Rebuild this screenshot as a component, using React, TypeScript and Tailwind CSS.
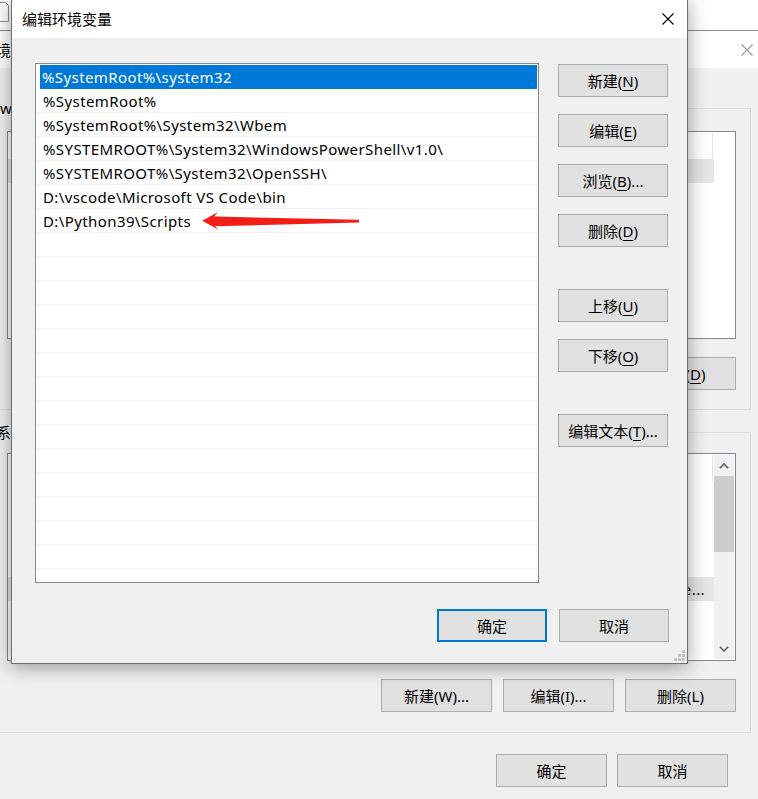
import React from "react";

const FONT = "font-['Noto_Sans','Noto_Sans_CJK_SC',sans-serif]";

function Btn({
  children,
  w = "w-[110px]",
  primary = false,
}: {
  children: React.ReactNode;
  w?: string;
  primary?: boolean;
}) {
  return (
    <div
      className={`flex h-[33px] shrink-0 items-center justify-center bg-[#e1e1e1] text-[15px] leading-[20px] text-black ${w} ${
        primary ? "border-2 border-[#0078d7]" : "border border-[#adadad]"
      }`}
    >
      {children}
    </div>
  );
}

function U({ children }: { children: React.ReactNode }) {
  return <span className="underline decoration-1 underline-offset-[3px]">{children}</span>;
}

function CloseX({ color, size = 12 }: { color: string; size?: number }) {
  return (
    <svg width={size} height={size} viewBox="0 0 12 12" className="shrink-0">
      <path d="M0.5 0.5 L11.5 11.5 M11.5 0.5 L0.5 11.5" stroke={color} strokeWidth="1.1" fill="none" />
    </svg>
  );
}

const paths = [
  "%SystemRoot%\\system32",
  "%SystemRoot%",
  "%SystemRoot%\\System32\\Wbem",
  "%SYSTEMROOT%\\System32\\WindowsPowerShell\\v1.0\\",
  "%SYSTEMROOT%\\System32\\OpenSSH\\",
  "D:\\vscode\\Microsoft VS Code\\bin",
  "D:\\Python39\\Scripts",
];

function BgList({ scroll, hlRow }: { scroll: boolean; hlRow: number }) {
  const rows = Array.from({ length: 8 });
  return (
    <div className="ml-[16px] mr-[14px] mt-[13px] flex h-[208px] overflow-hidden border border-[#828790] bg-white py-[1px]">
      <div className="flex min-w-0 flex-1 flex-col">
        <div className="h-[26px] w-[705px] shrink-0 border-r border-[#e5e5e5]" />
        {rows.map((_, i) => (
          <div
            key={i}
            className={`flex h-[24px] w-[706px] shrink-0 items-center justify-end overflow-hidden whitespace-nowrap pr-[9px] text-[15px] tracking-[0.4px] text-black ${
              i === hlRow ? "bg-[#e5e5e5]" : ""
            }`}
          >
            {i === hlRow && scroll ? "%SystemRoot%\\System32\\Wbem;%SYSTEMROOT%\\Syste..." : ""}
          </div>
        ))}
      </div>
      {scroll && (
        <div className="mr-[1px] flex w-[20px] shrink-0 flex-col bg-[#f0f0f0]">
          <div className="flex h-[21px] items-center justify-center">
            <svg width="10" height="6" viewBox="0 0 10 6">
              <path d="M0.8 5.2 L5 1 L9.2 5.2" stroke="#606060" strokeWidth="1.6" fill="none" />
            </svg>
          </div>
          <div className="h-[76px] bg-[#cdcdcd]" />
          <div className="flex-1" />
          <div className="flex h-[21px] items-center justify-center">
            <svg width="10" height="6" viewBox="0 0 10 6">
              <path d="M0.8 0.8 L5 5 L9.2 0.8" stroke="#606060" strokeWidth="1.6" fill="none" />
            </svg>
          </div>
        </div>
      )}
    </div>
  );
}

function BgButtons({ a, b, c }: { a: React.ReactNode; b: React.ReactNode; c: React.ReactNode }) {
  return (
    <div className="mr-[14px] mt-[18px] flex justify-end gap-[11px]">
      <Btn w="w-[111px]">{a}</Btn>
      <Btn w="w-[111px]">{b}</Btn>
      <Btn w="w-[111px]">{c}</Btn>
    </div>
  );
}

function BackgroundWindow() {
  return (
    <div className="absolute left-[-30px] top-[30px] flex h-[820px] w-[800px] flex-col border border-[#8a8a8a] bg-[#f0f0f0]">
      <div className="flex h-[37px] shrink-0 items-center justify-between bg-white pl-[10px] pr-[16px]">
        <span className="text-[15px] leading-[20px] text-black">环境</span>
        <CloseX color="#9a9a9a" />
      </div>
      <fieldset className="ml-[19px] mr-[18px] mt-[30px] border border-[#dcdcdc] pb-[19px]">
        <legend className="ml-[9px] text-[15px] leading-[20px] text-black">w</legend>
        <BgList scroll={false} hlRow={0} />
        <BgButtons
          a={<>新建(<U>N</U>)...</>}
          b={<>编辑(<U>E</U>)...</>}
          c={<>删除(<U>D</U>)</>}
        />
      </fieldset>
      <fieldset className="ml-[19px] mr-[18px] mt-[12px] border border-[#dcdcdc] pb-[20px]">
        <legend className="ml-[5px] text-[15px] leading-[20px] text-black">系统</legend>
        <div className="mt-[-2px]" />
        <BgList scroll={true} hlRow={4} />
        <BgButtons a={<>新建(W)...</>} b={<>编辑(I)...</>} c={<>删除(L)</>} />
      </fieldset>
      <div className="mr-[41px] mt-[21px] flex justify-end gap-[10px]">
        <Btn w="w-[111px]">确定</Btn>
        <Btn w="w-[111px]">取消</Btn>
      </div>
    </div>
  );
}

function PathList() {
  const empties = Array.from({ length: 16 });
  return (
    <div className="relative h-[520px] w-[504px] shrink-0 overflow-hidden border border-[#828790] bg-white pt-[1px] tracking-[0.4px]">
      <div className="flex h-[24px] pl-[4px] pr-[1px]">
        <div className="flex flex-1 items-center bg-[#0078d7] pl-[2px] text-[15px] leading-[20px] text-white">
          {paths[0]}
        </div>
      </div>
      {paths.slice(1).map((p) => (
        <div
          key={p}
          className="mx-[1px] flex h-[24px] items-center border-b border-[#f0f0f0] pl-[6px] pt-[1px] text-[15px] leading-[20px] text-black"
        >
          {p}
        </div>
      ))}
      {empties.map((_, i) => (
        <div key={i} className="mx-[1px] h-[24px] border-b border-[#f0f0f0]" />
      ))}
      <svg
        className="absolute left-[160px] top-[144px]"
        width="170"
        height="26"
        viewBox="0 0 170 26"
      >
        <polygon
          points="6.3,12.7 22,4 18,8.5 163,11.7 163,14.5 19,18.3 23,22"
          fill="#f21d17"
        />
      </svg>
    </div>
  );
}

function Dialog() {
  return (
    <div className="absolute left-[11px] top-[-1px] flex h-[665px] w-[677px] flex-col border border-[#6f6f6f] bg-[#f0f0f0] shadow-[0_3px_18px_rgba(0,0,0,0.38)]">
      <div className="flex h-[38px] shrink-0 items-center justify-between bg-white pl-[10px] pr-[13px]">
        <span className="text-[15px] leading-[20px] text-black">编辑环境变量</span>
        <CloseX color="#000000" />
      </div>
      <div className="flex flex-1 flex-col pl-[23px] pr-[18px] pt-[25px]">
        <div className="flex">
          <PathList />
          <div className="ml-[19px] flex flex-col pt-[1px]">
            <Btn>新建(<U>N</U>)</Btn>
            <div className="h-[17px]" />
            <Btn>编辑(<U>E</U>)</Btn>
            <div className="h-[17px]" />
            <Btn>浏览(<U>B</U>)...</Btn>
            <div className="h-[17px]" />
            <Btn>删除(<U>D</U>)</Btn>
            <div className="h-[42px]" />
            <Btn>上移(<U>U</U>)</Btn>
            <div className="h-[17px]" />
            <Btn>下移(<U>O</U>)</Btn>
            <div className="h-[42px]" />
            <Btn>编辑文本(<U>T</U>)...</Btn>
          </div>
        </div>
        <div className="mt-[26px] flex justify-end gap-[12px]">
          <Btn primary>确定</Btn>
          <Btn>取消</Btn>
        </div>
      </div>
      <svg className="absolute bottom-[2px] right-[2px]" width="11" height="11" viewBox="0 0 11 11">
        <rect x="8" y="0" width="3" height="3" fill="#c2c2c2" />
        <rect x="4" y="4" width="3" height="3" fill="#c2c2c2" />
        <rect x="8" y="4" width="3" height="3" fill="#c2c2c2" />
        <rect x="0" y="8" width="3" height="3" fill="#c2c2c2" />
        <rect x="4" y="8" width="3" height="3" fill="#c2c2c2" />
        <rect x="8" y="8" width="3" height="3" fill="#c2c2c2" />
      </svg>
    </div>
  );
}

export default function App() {
  return (
    <div className={`relative h-[799px] w-[758px] overflow-hidden bg-white ${FONT}`}>
      <div className="flex h-[30px] items-start pt-[1px]">
        <svg width="10" height="22" viewBox="0 0 10 22">
          <path d="M-4 1.5 H5.5 L8.5 4.5 V20.5 H-4" stroke="#8c8c8c" fill="#ffffff" strokeWidth="1" />
        </svg>
      </div>
      <BackgroundWindow />
      <Dialog />
    </div>
  );
}
